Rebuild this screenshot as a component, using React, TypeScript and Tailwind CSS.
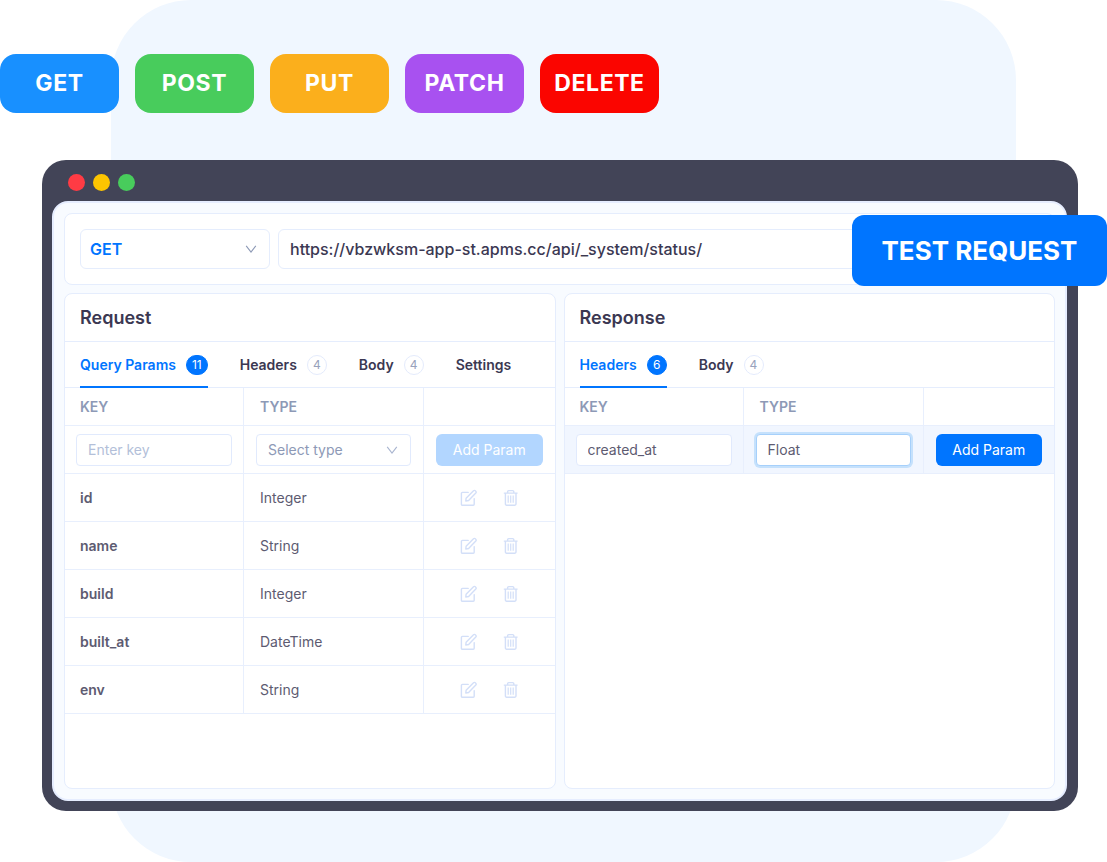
import React from "react";

const methods = [
  { label: "GET", color: "bg-[#1890ff]" },
  { label: "POST", color: "bg-[#48cc5c]" },
  { label: "PUT", color: "bg-[#fbaf1c]" },
  { label: "PATCH", color: "bg-[#a851f0]" },
  { label: "DELETE", color: "bg-[#fb0500]" },
];

const params = [
  { key: "id", type: "Integer" },
  { key: "name", type: "String" },
  { key: "build", type: "Integer" },
  { key: "built_at", type: "DateTime" },
  { key: "env", type: "String" },
];

function Chevron({ className = "" }: { className?: string }) {
  return (
    <svg
      viewBox="0 0 12 8"
      className={`pointer-events-none absolute top-1/2 h-2 w-3 -translate-y-1/2 ${className}`}
      fill="none"
      stroke="currentColor"
      strokeWidth="1.1"
      aria-hidden="true"
    >
      <path d="M1.2 0.8 L6 7 L10.8 0.8" />
    </svg>
  );
}

function EditIcon() {
  return (
    <svg
      viewBox="0 0 18 18"
      className="h-[18px] w-[18px]"
      fill="none"
      stroke="currentColor"
      strokeWidth="1.4"
      strokeLinejoin="round"
      strokeLinecap="round"
      aria-hidden="true"
    >
      <path d="M8.2 3.4H2.4a1 1 0 0 0-1 1V15.2a1 1 0 0 0 1 1H13.2a1 1 0 0 0 1-1V9.6" />
      <path d="M5.8 12L6.1 9.2L13.5 1.8a1.3 1.3 0 0 1 1.9 0l.4.4a1.3 1.3 0 0 1 0 1.9L8.6 11.5Z" />
    </svg>
  );
}

function TrashIcon() {
  return (
    <svg
      viewBox="0 0 16 18"
      className="h-[18px] w-4"
      fill="none"
      stroke="currentColor"
      strokeWidth="1.4"
      strokeLinejoin="round"
      aria-hidden="true"
    >
      <path d="M1.3 4.1H14.1" strokeLinecap="round" />
      <path d="M4.6 4V2.7a1.1 1.1 0 0 1 1.1-1.1H9.7a1.1 1.1 0 0 1 1.1 1.1V4" />
      <path d="M2.4 4.1V15.1a1.1 1.1 0 0 0 1.1 1.1H11.9a1.1 1.1 0 0 0 1.1-1.1V4.1" />
      <path strokeWidth="1.2" d="M5.2 6.6V13.8M7.7 6.6V13.8M10.2 6.6V13.8" />
    </svg>
  );
}

function Tab({ label, count, active }: { label: string; count?: number; active?: boolean }) {
  return (
    <button
      type="button"
      role="tab"
      aria-selected={!!active}
      className={`-mb-px flex items-center gap-2.5 border-b-2 pt-0.5 text-sm font-semibold ${
        active ? "border-[#0075ff] text-[#0075ff]" : "border-transparent text-[#3b3852]"
      }`}
    >
      {label}
      {count !== undefined && (
        <span
          className={`flex h-5 min-w-5 items-center justify-center rounded-full border px-[5px] text-xs font-normal ${
            active ? "border-[#0075ff] bg-[#0075ff] text-white" : "border-[#e4ebfc] text-[#98a2bc]"
          }`}
        >
          {count}
        </span>
      )}
    </button>
  );
}

function Panel({
  title,
  tabs,
  children,
}: {
  title: string;
  tabs: { label: string; count?: number; active?: boolean }[];
  children: React.ReactNode;
}) {
  return (
    <section className="min-w-0 flex-1 overflow-hidden rounded-lg border border-[#e5edfd] bg-white">
      <h2 className="border-b border-[#e5edfd] px-[15px] text-lg leading-[47px] font-semibold text-[#3b3852]">
        {title}
      </h2>
      <div role="tablist" className="flex h-[46px] gap-8 border-b border-[#e5edfd] px-[15px]">
        {tabs.map((tab) => (
          <Tab key={tab.label} {...tab} />
        ))}
      </div>
      <table className="w-full table-fixed border-separate border-spacing-0 text-left text-sm">
        <colgroup>
          <col className="w-[179px]" />
          <col className="w-[180px]" />
          <col />
        </colgroup>
        <thead>
          <tr className="h-[38px] text-[#8d99b6]">
            <th className="border-r border-b border-[#e8effd] px-[15px] font-semibold">KEY</th>
            <th className="border-r border-b border-[#e8effd] px-4 font-semibold">TYPE</th>
            <th className="border-b border-[#e8effd]" aria-label="Actions" />
          </tr>
        </thead>
        <tbody>{children}</tbody>
      </table>
    </section>
  );
}

const cell = "border-b border-[#e8effd]";
const sideCell = "border-r border-b border-[#e8effd]";

export default function App() {
  return (
    <main className="relative isolate flex min-h-screen flex-col pt-[54px] pb-[51px] font-['Inter',sans-serif]">
      <div className="absolute inset-y-0 right-[91px] left-[111px] -z-10 rounded-[80px] bg-[#f0f7ff]" />

      <ul className="flex gap-4">
        {methods.map((m) => (
          <li
            key={m.label}
            className={`flex h-[59px] w-[119px] items-center justify-center rounded-2xl text-[23px] font-bold tracking-wide text-white ${m.color}`}
          >
            {m.label}
          </li>
        ))}
      </ul>

      <div className="relative mt-[47px] mr-[29px] ml-[42px] flex flex-1 flex-col rounded-3xl bg-[#424457] pr-[11px] pb-2.5 pl-2.5">
        <div className="flex h-[41px] items-center gap-2 px-4 pt-1">
          <span className="h-[17px] w-[17px] rounded-full bg-[#ff3b44]" />
          <span className="h-[17px] w-[17px] rounded-full bg-[#fdc500]" />
          <span className="h-[17px] w-[17px] rounded-full bg-[#48cc5c]" />
        </div>

        <div className="flex flex-1 flex-col gap-2 rounded-2xl border-2 border-[#e6edff] bg-[#f8fbff] p-2.5">
          <form className="flex gap-2 rounded-lg border border-[#e5edfd] bg-white p-[15px]">
            <div className="relative w-[190px]">
              <select
                aria-label="Method"
                defaultValue="GET"
                className="h-10 w-full appearance-none rounded-md border border-[#e5edfd] bg-white px-[9px] text-base font-semibold text-[#0075ff]"
              >
                {methods.map((m) => (
                  <option key={m.label}>{m.label}</option>
                ))}
              </select>
              <Chevron className="right-[13px] text-[#8d99b6]" />
            </div>
            <input
              aria-label="Request URL"
              defaultValue="https://vbzwksm-app-st.apms.cc/api/_system/status/"
              className="h-10 min-w-0 flex-1 rounded-md border border-[#e5edfd] px-[11px] text-base font-medium text-[#3b3852]"
            />
          </form>

          <div className="flex flex-1 gap-2">
            <Panel
              title="Request"
              tabs={[
                { label: "Query Params", count: 11, active: true },
                { label: "Headers", count: 4 },
                { label: "Body", count: 4 },
                { label: "Settings" },
              ]}
            >
              <tr className="h-12">
                <td className={`${sideCell} px-[11px]`}>
                  <input
                    aria-label="Key"
                    placeholder="Enter key"
                    className="h-8 w-full rounded border border-[#e1eafd] px-[11px] text-[#5d5b71] placeholder:text-[#b3bfd9]"
                  />
                </td>
                <td className={`${sideCell} px-3`}>
                  <div className="relative">
                    <select
                      aria-label="Type"
                      defaultValue=""
                      className="h-8 w-full appearance-none rounded border border-[#e1eafd] bg-white px-[11px] text-[#8d99b6]"
                    >
                      <option value="">Select type</option>
                      <option>Integer</option>
                      <option>String</option>
                      <option>DateTime</option>
                    </select>
                    <Chevron className="right-[13px] text-[#a9b5d0]" />
                  </div>
                </td>
                <td className={`${cell} px-3`}>
                  <button type="button" disabled className="h-8 w-full rounded-md bg-[#b2d6ff] text-white">
                    Add Param
                  </button>
                </td>
              </tr>
              {params.map((p) => (
                <tr key={p.key} className="h-12 text-[#5d5b71]">
                  <td className={`${sideCell} px-[15px] font-semibold`}>{p.key}</td>
                  <td className={`${sideCell} px-4`}>{p.type}</td>
                  <td className={cell}>
                    <div className="flex justify-center gap-[25px] text-[#d3dff8]">
                      <button type="button" aria-label={`Edit ${p.key}`}>
                        <EditIcon />
                      </button>
                      <button type="button" aria-label={`Delete ${p.key}`}>
                        <TrashIcon />
                      </button>
                    </div>
                  </td>
                </tr>
              ))}
            </Panel>

            <Panel
              title="Response"
              tabs={[
                { label: "Headers", count: 6, active: true },
                { label: "Body", count: 4 },
              ]}
            >
              <tr className="h-12 bg-[#f1f6ff] text-[#5d5b71]">
                <td className={`${sideCell} px-[11px]`}>
                  <input
                    aria-label="Key"
                    defaultValue="created_at"
                    className="h-8 w-full rounded border border-[#e1eafd] bg-white px-[11px]"
                  />
                </td>
                <td className={`${sideCell} px-3`}>
                  <input
                    aria-label="Type"
                    defaultValue="Float"
                    className="h-8 w-full rounded border border-[#a6d0fb] bg-white px-[11px] ring-2 ring-[#c5e1fc]"
                  />
                </td>
                <td className={`${cell} px-3`}>
                  <button type="button" className="h-8 w-full rounded-md bg-[#0075ff] text-white">
                    Add Param
                  </button>
                </td>
              </tr>
            </Panel>
          </div>
        </div>

        <button
          type="button"
          className="absolute top-[55px] -right-[29px] h-[71px] w-[255px] rounded-xl bg-[#0075ff] text-[26px] font-bold text-white"
        >
          TEST REQUEST
        </button>
      </div>
    </main>
  );
}
